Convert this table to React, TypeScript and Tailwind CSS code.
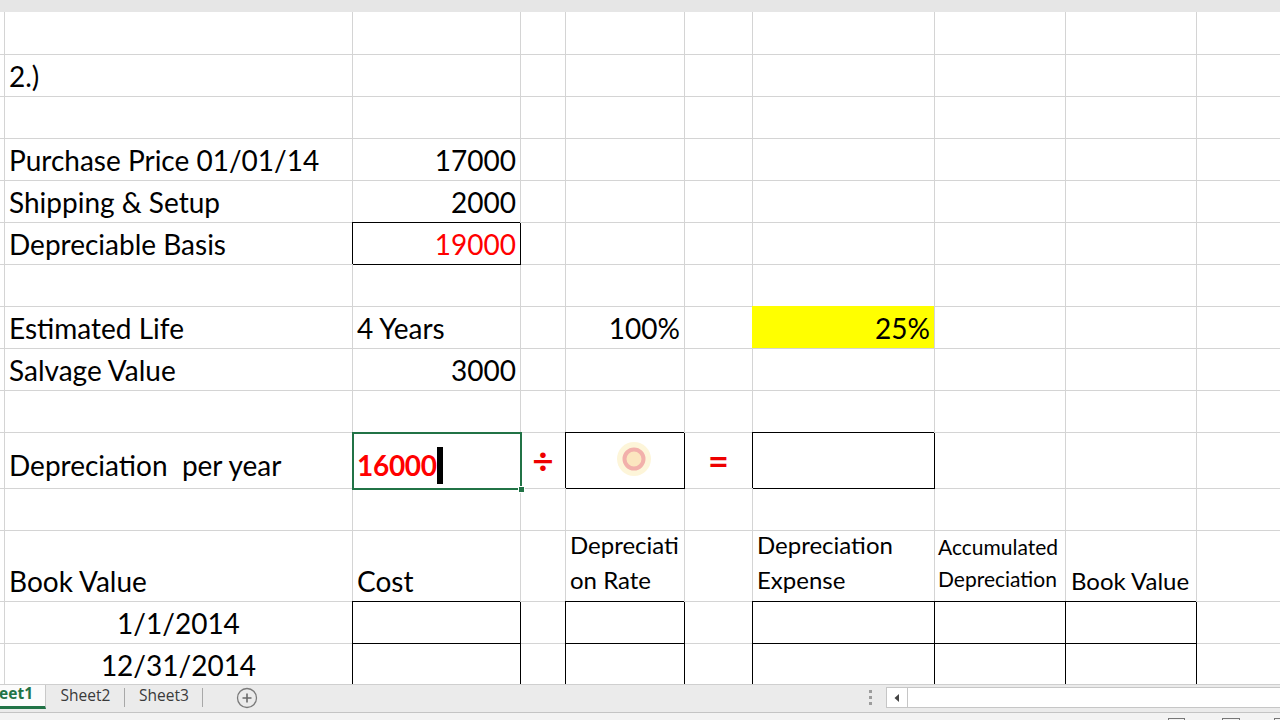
import React from "react";

const G = "border-l border-t border-[#d4d4d4]";
const BOX = "relative z-10 border-l border-t border-black shadow-[1px_1px_0_0_#000]";

type C = { k: string; cls?: string; children?: React.ReactNode };

function Cell({ cls = "", children }: { cls?: string; children?: React.ReactNode }) {
  return <div className={`${cls} min-w-0 overflow-visible whitespace-nowrap`}>{children}</div>;
}

const std = "flex items-end pb-[4px] px-[4px] leading-[32px]";

function Row({ cells, first }: { cells: (C | null)[]; first?: boolean }) {
  return (
    <>
      {cells.map((c, i) => {
        const base =
          i === 0
            ? first
              ? ""
              : "border-t border-[#d4d4d4]"
            : first
            ? "border-l border-[#d4d4d4]"
            : G;
        if (!c) return <Cell key={i} cls={base} />;
        return <Cell key={i} cls={c.cls ?? base}>{c.children}</Cell>;
      })}
    </>
  );
}

const E = (n: number) => Array.from({ length: n }, () => null as C | null);

function label(text: string): C {
  return { k: text, cls: `${G} ${std}`, children: <span className="whitespace-pre">{text}</span> };
}
function num(text: string, extra = ""): C {
  return { k: text, cls: `${G} ${std} justify-end ${extra}`, children: <span>{text}</span> };
}

export default function App() {
  const rows: { cells: (C | null)[] }[] = [
    { cells: E(10) },
    { cells: [null, label("2.)"), ...E(8)] },
    { cells: E(10) },
    { cells: [null, label("Purchase Price 01/01/14"), num("17000"), ...E(7)] },
    { cells: [null, label("Shipping & Setup"), num("2000"), ...E(7)] },
    {
      cells: [
        null,
        label("Depreciable Basis"),
        { k: "19000", cls: `${BOX} ${std} justify-end text-[#f00]`, children: <span>19000</span> },
        ...E(7),
      ],
    },
    { cells: E(10) },
    {
      cells: [
        null,
        label("Estimated Life"),
        { k: "4y", cls: `${G} ${std}`, children: <span>4 Years</span> },
        null,
        num("100%"),
        null,
        {
          k: "25",
          cls: `border-l border-t border-[#ffff00] bg-[#ffff00] ${std} justify-end`,
          children: <span>25%</span>,
        },
        null,
        null,
        null,
      ],
    },
    { cells: [null, label("Salvage Value"), num("3000"), ...E(7)] },
    { cells: E(10) },
    {
      cells: [
        null,
        {
          k: "dpy",
          cls: `${G} flex items-end pb-[7px] px-[4px] leading-[32px]`,
          children: <span className="whitespace-pre">Depreciation  per year</span>,
        },
        {
          k: "sel",
          cls: `relative z-20 border-l border-t border-[#d4d4d4] flex items-end pb-[7px] px-[4px] leading-[32px]`,
          children: (
            <>
              <span className="font-bold text-[#f00] tracking-[-0.3px]">16000</span>
              <span className="inline-block w-[6px] h-[37px] bg-black mb-[-3px]" />
              <div className="absolute left-[-1px] top-[-1px] w-[170px] h-[58px] border-2 border-[#217346] pointer-events-none" />
              <div className="absolute right-[-5px] bottom-[-5px] w-[7px] h-[7px] bg-[#217346] border border-white" />
            </>
          ),
        },
        {
          k: "div",
          cls: `${G} flex items-center justify-center pb-[2px]`,
          children: <span className="text-[#e00] font-bold text-[37px] leading-none">÷</span>,
        },
        {
          k: "box1",
          cls: `${BOX}`,
          children: (
            <svg className="absolute left-[50px] top-[8px]" width="36" height="36" viewBox="0 0 36 36">
              <circle cx="18" cy="18" r="17" fill="#fdf2cf" opacity="0.8" />
              <circle cx="18" cy="18" r="9.5" fill="#fbe6bf" stroke="#f2b0ab" strokeWidth="4" />
            </svg>
          ),
        },
        {
          k: "eq",
          cls: `${G} flex items-center justify-center pb-[2px]`,
          children: <span className="text-[#e00] font-bold text-[36px] leading-none">=</span>,
        },
        { k: "box2", cls: BOX },
        null,
        null,
        null,
      ],
    },
    { cells: E(10) },
    {
      cells: [
        null,
        label("Book Value"),
        { k: "cost", cls: `${G} ${std}`, children: <span>Cost</span> },
        null,
        {
          k: "dr",
          cls: `${G} flex items-end pb-[4px] px-[4px] text-[24px] leading-[35px]`,
          children: (
            <span>
              Depreciati
              <br />
              on Rate
            </span>
          ),
        },
        null,
        {
          k: "de",
          cls: `${G} flex items-end pb-[4px] px-[4px] text-[24px] leading-[35px]`,
          children: (
            <span>
              Depreciation
              <br />
              Expense
            </span>
          ),
        },
        {
          k: "ad",
          cls: `${G} flex items-end pb-[6px] px-[3px] text-[21px] leading-[32px]`,
          children: (
            <span>
              Accumulated
              <br />
              Depreciation
            </span>
          ),
        },
        {
          k: "bv",
          cls: `${G} flex items-end pb-[4px] px-[5px] text-[24px] leading-[32px]`,
          children: <span>Book Value</span>,
        },
        null,
      ],
    },
    {
      cells: [
        null,
        { k: "d1", cls: `${G} ${std} justify-center`, children: <span>1/1/2014</span> },
        { k: "b1", cls: BOX },
        null,
        { k: "b2", cls: BOX },
        null,
        { k: "b3", cls: BOX },
        { k: "b4", cls: BOX },
        { k: "b5", cls: BOX },
        null,
      ],
    },
    {
      cells: [
        null,
        { k: "d2", cls: `${G} ${std} justify-center`, children: <span>12/31/2014</span> },
        { k: "c1", cls: BOX },
        null,
        { k: "c2", cls: BOX },
        null,
        { k: "c3", cls: BOX },
        { k: "c4", cls: BOX },
        { k: "c5", cls: BOX },
        null,
      ],
    },
  ];

  return (
    <div className="w-[1280px] h-[720px] overflow-hidden bg-white flex flex-col font-[Lato,sans-serif] text-[28px] text-black">
      <div className="h-[12px] shrink-0 bg-[#e6e6e6]" />
      <div className="h-[672px] shrink-0 overflow-hidden">
        <div className="grid grid-cols-[4px_348px_168px_45px_119px_68px_182px_131px_131px_1fr] grid-rows-[42px_42px_42px_42px_42px_42px_42px_42px_42px_42px_56px_42px_71px_42px_42px]">
          {rows.map((r, i) => (
            <Row key={i} cells={r.cells} first={i === 0} />
          ))}
        </div>
      </div>
      {/* sheet tabs bar */}
      <div className="h-[29px] shrink-0 bg-[#ebebeb] border-t border-[#cfcfcf] border-b border-b-[#c4c4c4] flex items-stretch font-['Open_Sans',sans-serif] text-[15.5px] text-[#3a3a3a]">
        <div className="w-[46px] bg-[#fbfbfb] overflow-hidden flex justify-end items-center pr-[12px] pb-[4px] border-b-[3px] border-[#217346] border-r border-r-[#c8c8c8] mb-[3px]">
          <span className="font-bold text-[#217346] shrink-0">Sheet1</span>
        </div>
        <div className="w-[79px] flex items-center justify-center pb-[6px] relative">
          <span>Sheet2</span>
          <div className="absolute right-0 top-[3px] h-[19px] w-px bg-[#a8a8a8]" />
        </div>
        <div className="w-[78px] flex items-center justify-center pb-[6px] relative">
          <span>Sheet3</span>
          <div className="absolute right-0 top-[3px] h-[19px] w-px bg-[#a8a8a8]" />
        </div>
        <div className="w-[55px] flex items-center justify-end pb-[2px]">
          <svg width="22" height="22" viewBox="0 0 22 22">
            <circle cx="11" cy="11" r="9.5" fill="none" stroke="#7a7a7a" strokeWidth="1.3" />
            <path d="M11 6.5v9M6.5 11h9" stroke="#6a6a6a" strokeWidth="1.6" />
          </svg>
        </div>
        <div className="flex-1" />
        <div className="w-[16px] flex flex-col items-center justify-center gap-[3px] pb-[2px] mr-[8px]">
          <div className="w-[3px] h-[3px] bg-[#9c9c9c]" />
          <div className="w-[3px] h-[3px] bg-[#9c9c9c]" />
          <div className="w-[3px] h-[3px] bg-[#9c9c9c]" />
        </div>
        <div className="w-[394px] mt-[2px] mb-[4px] bg-white border border-[#c6c6c6] border-r-0 flex">
          <div className="w-[21px] border-r border-[#c6c6c6] flex items-center justify-center">
            <svg width="8" height="10" viewBox="0 0 8 10">
              <path d="M6 1L1.5 5L6 9Z" fill="#444" />
            </svg>
          </div>
        </div>
      </div>
      <div className="flex-1 bg-[#f3f3f3] relative flex justify-end items-start">
        <div className="w-[17px] h-[4px] border-t border-l border-r border-[#777] mt-[5px] mr-[37px]" />
        <div className="w-[18px] h-[4px] border-t border-l border-r border-[#777] mt-[5px] mr-[34px]" />
        <div className="w-[6px] h-[4px] border-t border-l border-[#777] mt-[5px]" />
      </div>
    </div>
  );
}
